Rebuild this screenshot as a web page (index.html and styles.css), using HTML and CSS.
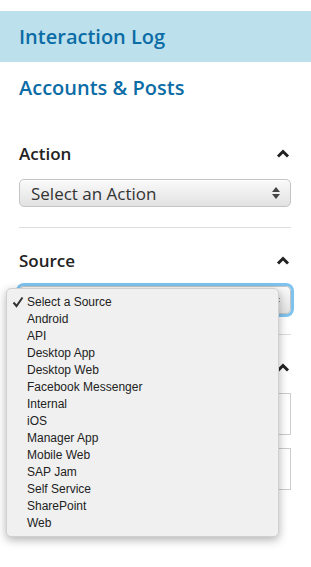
FILE: index.html
```html
<!DOCTYPE html>
<html lang="en">
<head>
    <meta charset="UTF-8">
    <meta name="viewport" content="width=device-width, initial-scale=1.0">
    <title>Interaction Log</title>
    <link rel="stylesheet" href="styles.css">
</head>
<body>

    <div class="nav-item active">Interaction Log</div>
    <div class="nav-item">Accounts &amp; Posts</div>

    <div class="filter first">
        <div class="filter-head">
            <span>Action</span>
            <svg class="chevron" width="14" height="9" viewBox="0 0 14 9"><polyline points="2,7.5 7,2.5 12,7.5" fill="none" stroke="#222" stroke-width="3"/></svg>
        </div>
        <div class="select">
            <span>Select an Action</span>
            <svg class="arrows" width="8" height="12" viewBox="0 0 8 12"><polygon points="4,0 8,5 0,5" fill="#444"/><polygon points="0,7 8,7 4,12" fill="#444"/></svg>
        </div>
    </div>

    <div class="filter">
        <div class="filter-head">
            <span>Source</span>
            <svg class="chevron" width="14" height="9" viewBox="0 0 14 9"><polyline points="2,7.5 7,2.5 12,7.5" fill="none" stroke="#222" stroke-width="3"/></svg>
        </div>
        <div class="select focused">
            <span></span>
            <svg class="arrows" width="8" height="12" viewBox="0 0 8 12"><polygon points="4,0 8,5 0,5" fill="#444"/><polygon points="0,7 8,7 4,12" fill="#444"/></svg>
        </div>

        <!-- открытый список источников -->
        <ul class="dropdown">
            <li><svg class="check" width="12" height="12" viewBox="0 0 12 12"><polyline points="1.5,6.5 4.5,10 10.5,1.5" fill="none" stroke="#333" stroke-width="2"/></svg>Select a Source</li>
            <li>Android</li>
            <li>API</li>
            <li>Desktop App</li>
            <li>Desktop Web</li>
            <li>Facebook Messenger</li>
            <li>Internal</li>
            <li>iOS</li>
            <li>Manager App</li>
            <li>Mobile Web</li>
            <li>SAP Jam</li>
            <li>Self Service</li>
            <li>SharePoint</li>
            <li>Web</li>
        </ul>
    </div>

    <div class="filter last">
        <div class="filter-head">
            <span></span>
            <svg class="chevron" width="14" height="9" viewBox="0 0 14 9"><polyline points="2,7.5 7,2.5 12,7.5" fill="none" stroke="#222" stroke-width="3"/></svg>
        </div>
        <div class="text-box"></div>
        <div class="text-box"></div>
    </div>

</body>
</html>
```

FILE: styles.css
```css
html {
    height: 100%;
}
body {
    font-family: "Open Sans", sans-serif;
    background: #fff;
    color: #333;
    margin: 0;
    padding-top: 11px;
    min-height: 100%;
    box-sizing: border-box;
}
.nav-item {
    height: 51px;
    line-height: 51px;
    padding: 0 19px;
    font-size: 20px;
    font-weight: 600;
    color: #0b6ca6;
}
.nav-item.active {
    background: #bde1ec;
}
.filter {
    position: relative;
    margin: 0 20px 0 19px;
    padding: 20px 0;
    border-bottom: 1px solid #ddd;
}
.filter.first {
    margin-top: 8px;
}
.filter.last {
    border-bottom: none;
    padding-bottom: 60px;
}
.filter-head {
    display: flex;
    justify-content: space-between;
    align-items: center;
    height: 24px;
    font-size: 17px;
    font-weight: 600;
    color: #222;
    margin-bottom: 14px;
}
.chevron {
    margin-right: 1px;
}
.select {
    display: flex;
    justify-content: space-between;
    align-items: center;
    height: 26px;
    padding: 0 10px 0 11px;
    border: 1px solid #c4c4c4;
    border-radius: 5px;
    background: linear-gradient(to bottom, #fafafa, #e2e2e2);
    box-shadow: inset 0 1px 0 #fff;
    font-size: 17px;
    color: #333;
}
.select.focused {
    box-shadow: 0 0 0 3px #7ec3ef;
}
.text-box {
    height: 40px;
    border: 1px solid #ccc;
}
.text-box + .text-box {
    margin-top: 13px;
}
.dropdown {
    position: absolute;
    z-index: 10;
    left: -13px;
    top: 60px;
    width: 271px;
    margin: 0;
    padding: 5px 0 4px;
    list-style: none;
    background: #f0f0f0;
    border: 1px solid #d0d0d0;
    border-radius: 5px;
    box-shadow: 0 3px 10px rgba(0, 0, 0, 0.3);
    font-family: "Liberation Sans", Arial, sans-serif;
    font-size: 12px;
    color: #222;
}
.dropdown li {
    height: 17px;
    line-height: 17px;
    padding-left: 20px;
    position: relative;
}
.check {
    position: absolute;
    left: 5px;
    top: 2px;
}
```
